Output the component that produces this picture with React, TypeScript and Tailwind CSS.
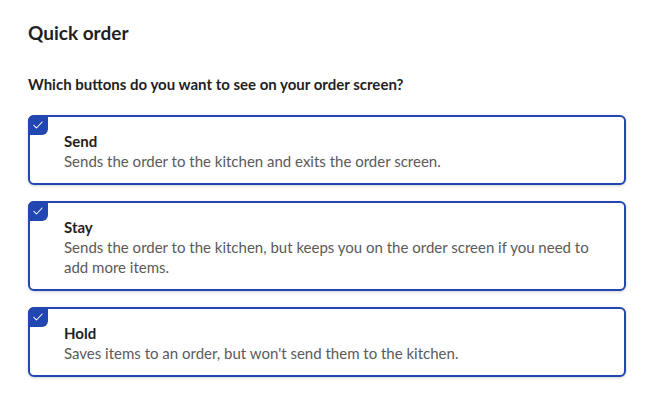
const options = [
  {
    title: "Send",
    description: "Sends the order to the kitchen and exits the order screen.",
  },
  {
    title: "Stay",
    description:
      "Sends the order to the kitchen, but keeps you on the order screen if you need to add more items.",
  },
  {
    title: "Hold",
    description: "Saves items to an order, but won't send them to the kitchen.",
  },
];

const CheckBadge = () => (
  <div className="absolute -left-[2px] -top-[2px] flex h-5 w-5 items-center justify-center rounded-tl-md rounded-br-md bg-[#2347b0]">
    <svg viewBox="0 0 16 16" className="h-3 w-3" fill="none" stroke="white" strokeWidth="1.4" strokeLinecap="round" strokeLinejoin="round">
      <path d="M2.5 8.5l3.5 3.5 7.5-8" />
    </svg>
  </div>
);

export default function App() {
  return (
    <div className="min-h-screen bg-white px-[28px] pt-[20px] font-['Lato','Noto_Sans',sans-serif] text-[#1f1f1f]">
      <h1 className="text-[19px] font-bold leading-[26px]">Quick order</h1>
      <p className="mt-[28px] text-[15px] font-bold leading-[20px]">
        Which buttons do you want to see on your order screen?
      </p>
      <div className="mt-[21px] flex w-[598px] flex-col gap-4">
        {options.map((option) => (
          <label
            key={option.title}
            className="relative block rounded-md border-2 border-[#2347b0] bg-white pb-[12px] pl-[34px] pr-[30px] pt-[14px] shadow-[0_1px_3px_rgba(0,0,0,0.18)]"
          >
            <CheckBadge />
            <div className="text-[15px] font-bold leading-[20px]">{option.title}</div>
            <div className="text-[15px] leading-[20px] text-[#5a5a5a]">{option.description}</div>
          </label>
        ))}
      </div>
    </div>
  );
}
